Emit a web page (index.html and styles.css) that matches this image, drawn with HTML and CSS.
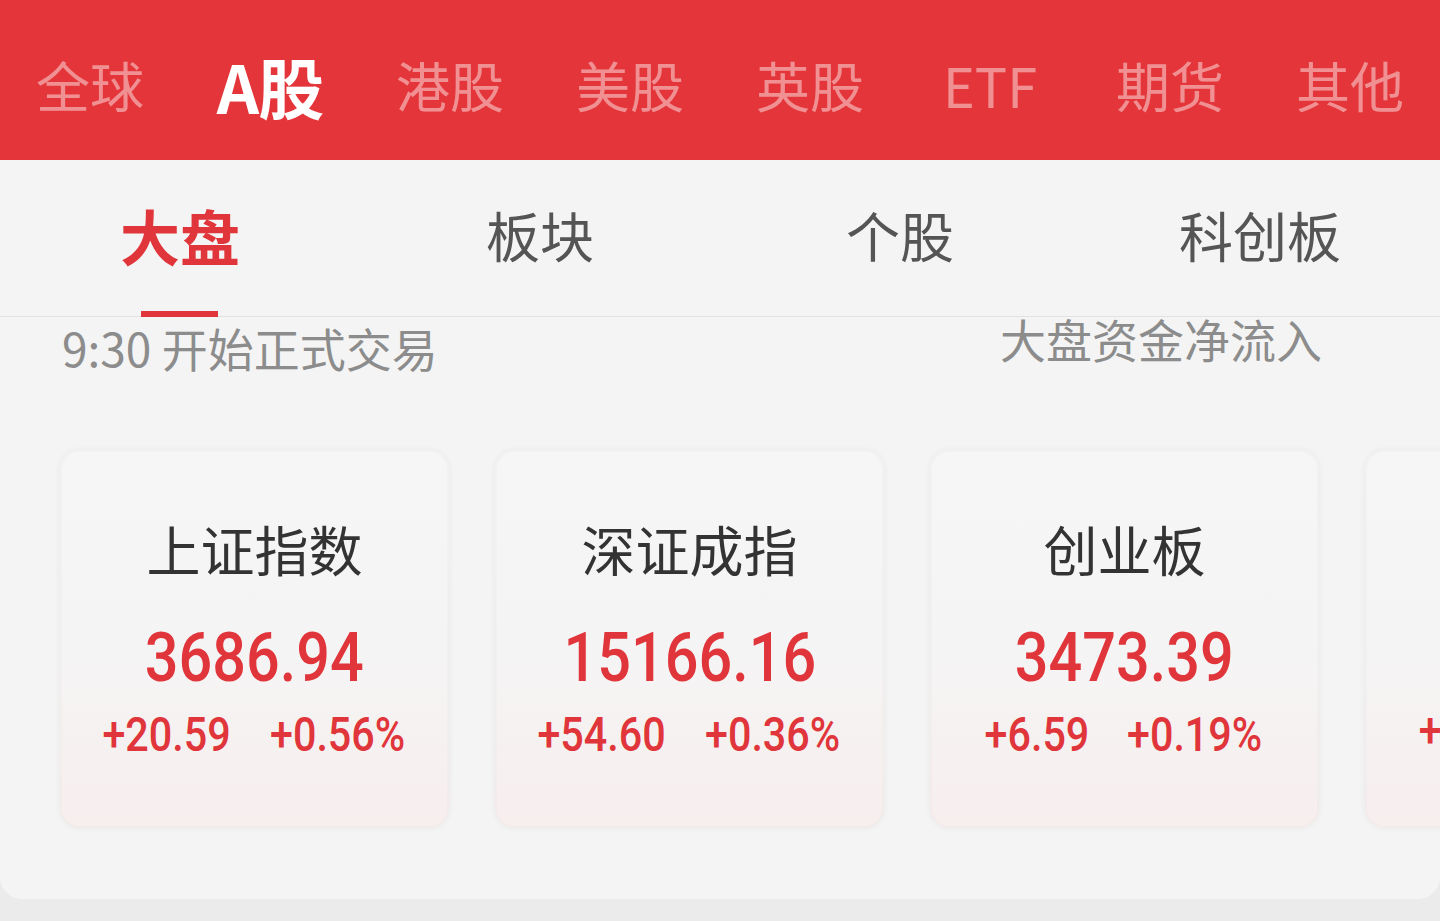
FILE: index.html
```html
<!DOCTYPE html>
<html lang="zh-CN">
<head>
<meta charset="utf-8">
<title>行情</title>
<link rel="stylesheet" href="styles.css">
</head>
<body>
<div class="page">
  <header class="market-bar">
    <div class="market-tab">全球</div>
    <div class="market-tab active">A股</div>
    <div class="market-tab">港股</div>
    <div class="market-tab">美股</div>
    <div class="market-tab">英股</div>
    <div class="market-tab">ETF</div>
    <div class="market-tab">期货</div>
    <div class="market-tab">其他</div>
  </header>
  <main class="panel">
    <nav class="sub-tabs">
      <div class="sub-tab active">大盘</div>
      <div class="sub-tab">板块</div>
      <div class="sub-tab">个股</div>
      <div class="sub-tab">科创板</div>
    </nav>
    <div class="info-row">
      <div class="info-left">9:30 开始正式交易</div>
      <div class="info-right">大盘资金净流入</div>
    </div>
    <div class="cards">
      <div class="card">
        <div class="card-title">上证指数</div>
        <div class="card-value"><span class="num">3686.94</span></div>
        <div class="card-change"><span class="num">+20.59</span><span class="num">+0.56%</span></div>
      </div>
      <div class="card">
        <div class="card-title">深证成指</div>
        <div class="card-value"><span class="num">15166.16</span></div>
        <div class="card-change"><span class="num">+54.60</span><span class="num">+0.36%</span></div>
      </div>
      <div class="card">
        <div class="card-title">创业板</div>
        <div class="card-value"><span class="num">3473.39</span></div>
        <div class="card-change"><span class="num">+6.59</span><span class="num">+0.19%</span></div>
      </div>
      <div class="card card-partial">
        <div class="card-change card-change-edge"><span class="num">+</span></div>
      </div>
    </div>
  </main>
</div>
</body>
</html>
```

FILE: styles.css
```css
* { box-sizing: border-box; }
html, body {
  margin: 0;
  padding: 0;
  width: 1440px;
  height: 921px;
  overflow: hidden;
  background: #ebebeb;
  font-family: "Noto Sans CJK SC", "Noto Sans", sans-serif;
}
.page {
  width: 1440px;
  height: 921px;
  display: flex;
  flex-direction: column;
}
.market-bar {
  height: 160px;
  background: #e4363a;
  display: grid;
  grid-template-columns: repeat(8, 180px);
  align-items: center;
  padding-top: 10px;
}
.market-tab {
  text-align: center;
  font-size: 54px;
  line-height: 1;
  color: rgba(255, 255, 255, 0.45);
}
.market-tab.active {
  color: #ffffff;
  font-weight: 700;
  font-size: 66px;
  letter-spacing: -1px;
}
.panel {
  height: 739px;
  background: #f4f4f4;
  border-radius: 0 0 22px 22px;
  overflow: hidden;
}
.sub-tabs {
  height: 157px;
  display: grid;
  grid-template-columns: repeat(4, 1fr);
  border-bottom: 1px solid #e2e2e2;
}
.sub-tab {
  display: flex;
  align-items: center;
  justify-content: center;
  font-size: 54px;
  color: #555555;
  position: relative;
  padding-bottom: 8px;
}
.sub-tab.active {
  color: #e0353a;
  font-weight: 700;
  font-size: 60px;
}
.sub-tab.active::after {
  content: "";
  position: absolute;
  left: 50%;
  bottom: -1px;
  width: 77px;
  height: 6px;
  margin-left: -39px;
  background: #e0353a;
}
.info-row {
  display: flex;
  justify-content: space-between;
  padding: 0 118px 0 62px;
  height: 70px;
}
.info-left {
  font-size: 46px;
  line-height: 1;
  color: #8c8c8c;
  padding-top: 7px;
}
.info-right {
  font-size: 46px;
  line-height: 1;
  color: #8c8c8c;
  margin-top: -2px;
}
.cards {
  display: flex;
  gap: 46px;
  padding: 63px 0 0 60px;
}
.card {
  flex: 0 0 389px;
  height: 378px;
  border-radius: 20px;
  background: linear-gradient(180deg, #f6f6f6 0%, #f5f4f4 55%, #f7eeee 100%);
  box-shadow: 0 0 6px rgba(0, 0, 0, 0.06), inset 0 0 0 2px rgba(0, 0, 0, 0.015);
  display: flex;
  flex-direction: column;
  align-items: center;
}
.card-title {
  margin-top: 72px;
  font-size: 54px;
  line-height: 1;
  color: #333333;
}
.card-value {
  margin-top: 45px;
  height: 72px;
  display: flex;
  align-items: center;
  color: #e0353a;
}
.card-value .num {
  font-family: "Roboto", "Liberation Sans", sans-serif;
  font-weight: 500;
  font-size: 69px;
  line-height: 1;
  display: inline-block;
  transform: scaleX(0.86);
}
.card-change {
  margin-top: 13px;
  display: flex;
  gap: 18px;
  color: #e0353a;
}
.card-change .num {
  font-family: "Roboto", "Liberation Sans", sans-serif;
  font-weight: 500;
  font-size: 48px;
  line-height: 1.2;
  display: inline-block;
  transform: scaleX(0.86);
}
.card-partial {
  align-items: flex-start;
  padding-left: 52px;
}
.card-change-edge {
  margin-top: 252px;
}
```
